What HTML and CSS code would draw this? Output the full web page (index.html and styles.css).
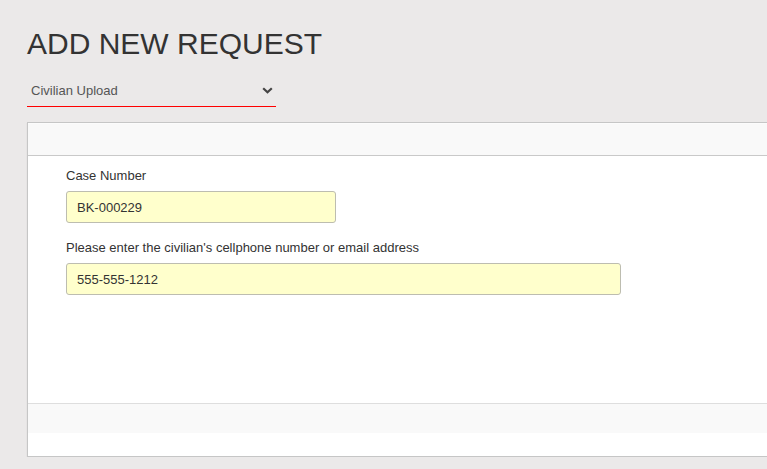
FILE: index.html
```html
<!DOCTYPE html>
<html lang="en">
<head>
    <meta charset="UTF-8">
    <meta name="viewport" content="width=device-width, initial-scale=1.0">
    <title>Add New Request</title>
    <link rel="stylesheet" href="styles.css">
</head>
<body>
    <div class="page">
        <h1 class="page-title">ADD NEW REQUEST</h1>

        <div class="type-select">
            <span class="type-value">Civilian Upload</span>
            <svg class="chevron" width="11" height="7" viewBox="0 0 11 7">
                <path d="M1.2 1.2 L5.5 5.3 L9.8 1.2" fill="none" stroke="#444" stroke-width="2.2"/>
            </svg>
        </div>

        <div class="panel">
            <div class="panel-header"></div>
            <div class="panel-body">
                <label class="field-label">Case Number</label>
                <input class="field-input short" type="text" value="BK-000229">

                <label class="field-label">Please enter the civilian's cellphone number or email address</label>
                <input class="field-input long" type="text" value="555-555-1212">
            </div>
            <div class="panel-footer">
                <div class="footer-bar"></div>
            </div>
        </div>
    </div>
</body>
</html>
```

FILE: styles.css
```css
html, body {
    margin: 0;
    padding: 0;
    background-color: #ebe9e9;
    overflow: hidden;
}
body {
    font-family: "Liberation Sans", Arial, sans-serif;
    color: #333;
}
.page {
    padding: 26px 0 0 27px;
}
.page-title {
    margin: 0;
    font-size: 30px;
    font-weight: normal;
    line-height: 36px;
    color: #333;
}
.type-select {
    display: flex;
    align-items: center;
    justify-content: space-between;
    width: 249px;
    height: 29px;
    margin-top: 16px;
    padding: 0 3px 4px 4px;
    box-sizing: border-box;
    border-bottom: 1px solid #f00;
    font-size: 13px;
    color: #555;
}
.chevron {
    margin-top: 1px;
}

.panel {
    margin-top: 15px;
    background: #fff;
    border: 1px solid #c6c6c6;
    border-right: none;
    box-shadow: 0 1px 1px rgba(0, 0, 0, 0.12);
}
.panel-header {
    height: 33px;
    background: #f9f9f9;
    border-top: 1px solid #fcfcfc;
    border-bottom: 1px solid #c9c9c9;
    box-sizing: border-box;
}
.panel-body {
    display: flex;
    flex-direction: column;
    align-items: flex-start;
    height: 247px;
    padding: 12px 0 0 38px;
    box-sizing: border-box;
}
.field-label {
    font-size: 13px;
    line-height: 15px;
    color: #333;
    margin-bottom: 8px;
}
.field-input {
    height: 32px;
    box-sizing: border-box;
    margin: 0 0 17px 0;
    padding: 0 10px;
    font-family: "Liberation Sans", Arial, sans-serif;
    font-size: 13px;
    color: #333;
    background: #ffffcc;
    border: 1px solid #bdbdb0;
    border-radius: 3px;
    outline: none;
}
.short {
    width: 270px;
}
.long {
    width: 555px;
}
.panel-footer {
    height: 53px;
    border-top: 1px solid #dedede;
    box-sizing: border-box;
}
.footer-bar {
    height: 29px;
    background: #f9f9f9;
}
```
